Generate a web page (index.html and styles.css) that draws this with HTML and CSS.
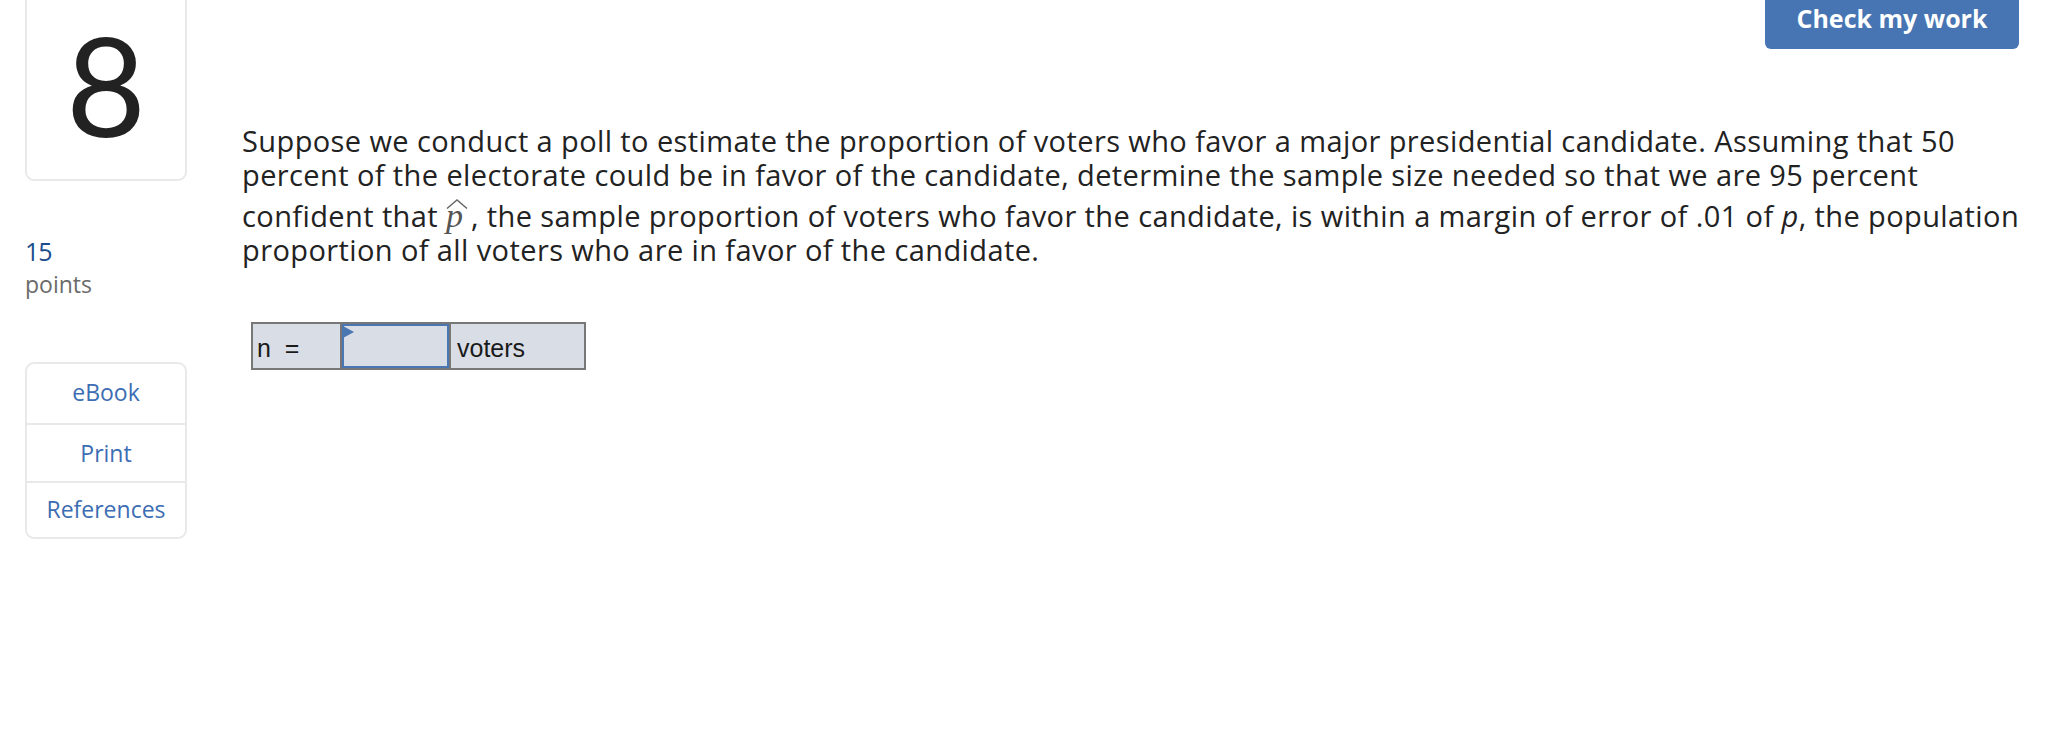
FILE: index.html
```html
<!DOCTYPE html>
<html lang="en">
<head>
<meta charset="utf-8">
<title>Question 8</title>
<link rel="stylesheet" href="styles.css">
</head>
<body>
<div class="page">
  <aside class="side">
    <div class="qnum">8</div>
    <div class="points">
      <span class="pts-num">15</span>
      <span class="pts-label">points</span>
    </div>
    <nav class="tools">
      <a class="tool" href="#">eBook</a>
      <a class="tool" href="#">Print</a>
      <a class="tool" href="#">References</a>
    </nav>
  </aside>
  <main class="main">
    <div class="topbar">
      <button class="check" type="button">Check my work</button>
    </div>
    <p class="question">Suppose we conduct a poll to estimate the proportion of voters who favor a major presidential candidate. Assuming that 50<br>percent of the electorate could be in favor of the candidate, determine the sample size needed so that we are 95 percent<br>confident that <span class="phat"><svg class="hat" viewBox="0 0 22 10" width="22" height="10"><polyline points="1,9.5 11,1 21,9.5" fill="none" stroke="#666" stroke-width="1.4"/></svg><span class="pvar">p</span></span> , the sample proportion of voters who favor the candidate, is within a margin of error of .01 of <i>p</i>, the population<br>proportion of all voters who are in favor of the candidate.</p>
    <div class="answer">
      <span class="lbl">n&nbsp; =</span>
      <span class="field"></span>
      <span class="unit">voters</span>
    </div>
  </main>
</div>
</body>
</html>
```

FILE: styles.css
```css
* { box-sizing: border-box; }
html, body { margin: 0; padding: 0; background: #fff; }
body {
  font-family: "Open Sans", "Lato", sans-serif;
  color: #222;
  overflow: hidden;
}
.page {
  display: flex;
  padding-left: 25px;
  padding-right: 33px;
  margin-top: -8px;
}
.side {
  width: 162px;
  flex: none;
  display: flex;
  flex-direction: column;
}
.qnum {
  height: 189px;
  border: 2px solid #e9e9e9;
  border-radius: 9px;
  display: flex;
  align-items: center;
  justify-content: center;
  font-family: "Lato", sans-serif;
  font-size: 138px;
  font-weight: 400;
  color: #222;
  line-height: 1;
  padding-bottom: 6px;
}
.points {
  display: flex;
  flex-direction: column;
  margin-top: 56px;
}
.pts-num {
  font-size: 25px;
  line-height: 28px;
  color: #1d4c8c;
  letter-spacing: -1px;
}
.pts-label {
  margin-top: 5px;
  font-size: 23px;
  line-height: 28px;
  color: #6b6b6b;
}
.tools {
  margin-top: 64px;
  border: 2px solid #e9e9e9;
  border-radius: 9px;
  display: flex;
  flex-direction: column;
}
.tool {
  display: block;
  text-align: center;
  color: #3d6db3;
  text-decoration: none;
  font-size: 23px;
  height: 59px;
  line-height: 57px;
}
.tool + .tool {
  border-top: 2px solid #e9e9e9;
  height: 58px;
  line-height: 56px;
}
.tool:last-child { height: 56px; line-height: 52px; }
.main {
  flex: 1;
  min-width: 0;
  margin-left: 55px;
  display: flex;
  flex-direction: column;
  align-items: flex-start;
}
.topbar {
  align-self: stretch;
  display: flex;
  justify-content: flex-end;
}
.check {
  width: 254px;
  height: 57px;
  background: #4775b3;
  color: #fff;
  border: none;
  border-radius: 6px;
  font-family: "Open Sans", sans-serif;
  font-weight: 700;
  font-size: 25px;
  padding: 0 0 6px;
}
.question {
  margin: 75px 0 0;
  font-size: 29px;
  letter-spacing: 0.4px;
  line-height: 34px;
  white-space: nowrap;
}
.phat {
  display: inline-block;
  position: relative;
  padding-top: 13px;
  line-height: 22px;
  vertical-align: baseline;
  letter-spacing: 0;
}
.hat {
  position: absolute;
  top: 7px;
  left: 50%;
  margin-left: -9px;
}
.pvar {
  font-family: "Liberation Serif", "DejaVu Serif", serif;
  font-style: italic;
  font-size: 34px;
  color: #555;
}
.answer {
  display: flex;
  margin: 55px 0 0 9px;
  border: 2px solid #777;
  background: #d9dde6;
  height: 48px;
  font-family: "Liberation Sans", Arial, sans-serif;
  font-size: 25px;
  color: #1a1a1a;
}
.lbl {
  width: 89px;
  padding: 4px 0 0 4px;
  line-height: 40px;
  border-right: 2px solid #777;
  white-space: nowrap;
}
.field {
  width: 107px;
  border: 2px solid #4a76b2;
  position: relative;
}
.field::before {
  content: "";
  position: absolute;
  left: -1px;
  top: 0;
  border-left: 11px solid #4a76b2;
  border-top: 6px solid transparent;
  border-bottom: 6px solid transparent;
}
.unit {
  width: 135px;
  padding: 4px 0 0 6px;
  line-height: 40px;
  border-left: 2px solid #777;
}
```
